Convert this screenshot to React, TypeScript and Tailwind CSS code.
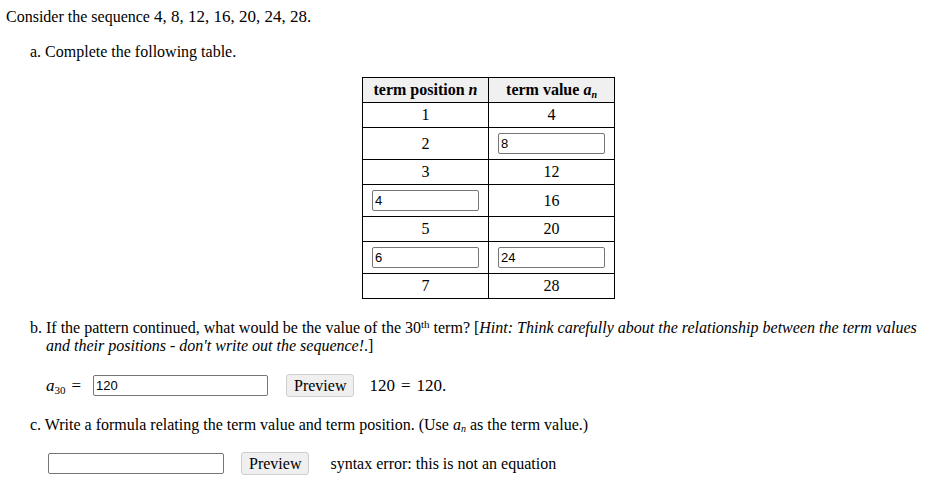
const serif = { fontFamily: '"Liberation Serif", "Times New Roman", serif' }
const sans = { fontFamily: '"Liberation Sans", Arial, sans-serif' }

type Cell = { text?: string; input?: string }

const ROWS: [Cell, Cell][] = [
  [{ text: '1' }, { text: '4' }],
  [{ text: '2' }, { input: '8' }],
  [{ text: '3' }, { text: '12' }],
  [{ input: '4' }, { text: '16' }],
  [{ text: '5' }, { text: '20' }],
  [{ input: '6' }, { input: '24' }],
  [{ text: '7' }, { text: '28' }],
]

function TableCell({ cell }: { cell: Cell }) {
  if (cell.input !== undefined) {
    return (
      <td className="h-[32px] border border-black px-[9px] text-center align-middle">
        <input
          readOnly
          value={cell.input}
          className="box-border block h-[21px] w-[107px] rounded-[2px] border border-[#767676] bg-white px-[2px] text-[13px] text-black outline-none"
          style={sans}
        />
      </td>
    )
  }
  return (
    <td className="h-[25px] border border-black text-center align-middle text-[16px] leading-[18px]">
      {cell.text}
    </td>
  )
}

function PreviewButton() {
  return (
    <button
      type="button"
      className="h-[23px] rounded-[3px] border border-[#cfcfcf] bg-[#efefef] px-[7px] text-[16px] leading-none text-black"
      style={serif}
    >
      Preview
    </button>
  )
}

export default function App() {
  return (
    <div className="min-h-screen bg-white text-[16px] text-black" style={serif}>
      <div className="pl-[6px] pt-[8px] leading-[18px]" style={serif}>
        Consider the sequence <span className="text-[17px]">4, 8, 12, 16, 20, 24, 28.</span>
      </div>

      <div className="pl-[30px] pt-[17px] leading-[18px]" style={serif}>
        a. Complete the following table.
      </div>

      <div className="pl-[362px] pt-[16px]">
        <table className="border-collapse border border-black" style={serif}>
          <thead>
            <tr className="bg-[#f0f0f0]">
              <th className="h-[25px] w-[126px] border border-black text-center text-[16px] font-bold leading-[18px]">
                term position <i className="font-bold">n</i>
              </th>
              <th className="h-[25px] w-[126px] border border-black text-center text-[16px] font-bold leading-[18px]">
                term value <i className="font-bold">a<sub className="text-[10px]">n</sub></i>
              </th>
            </tr>
          </thead>
          <tbody>
            {ROWS.map((row, i) => (
              <tr key={i}>
                <TableCell cell={row[0]} />
                <TableCell cell={row[1]} />
              </tr>
            ))}
          </tbody>
        </table>
      </div>

      <div className="pl-[30px] pr-[16px] pt-[20px] leading-[18px]" style={serif}>
        <div className="pl-[16px] -indent-[16px]">
          b. If the pattern continued, what would be the value of the 30
          <sup className="text-[11px] leading-none">th</sup> term? [
          <i>
            Hint: Think carefully about the relationship between the term values and their positions -
            don't write out the sequence!
          </i>
          .]
        </div>
      </div>

      <div className="flex items-center pl-[46px] pt-[18px]" style={serif}>
        <span className="w-[47px] text-[17px] leading-none">
          <i>a</i>
          <sub className="text-[11px]">30</sub>
          <span className="ml-[6px]">=</span>
        </span>
        <input
          readOnly
          value="120"
          className="box-border h-[21px] w-[175px] rounded-[2px] border border-[#767676] bg-white px-[2px] text-[13px] text-black outline-none"
          style={sans}
        />
        <span className="ml-[18px] flex">
          <PreviewButton />
        </span>
        <span className="ml-[15px] text-[17px]">
          120<span className="mx-[6px]">=</span>120.
        </span>
      </div>

      <div className="pl-[30px] pt-[17px] leading-[18px]" style={serif}>
        c. Write a formula relating the term value and term position. (Use{' '}
        <i>
          a<sub className="text-[10px]">n</sub>
        </i>{' '}
        as the term value.)
      </div>

      <div className="flex items-center pl-[48px] pt-[18px]" style={serif}>
        <input
          readOnly
          value=""
          className="box-border h-[21px] w-[176px] rounded-[2px] border border-[#767676] bg-white px-[2px] text-[13px] outline-none"
        />
        <span className="ml-[17px] flex">
          <PreviewButton />
        </span>
        <span className="ml-[21px]">syntax error: this is not an equation</span>
      </div>
    </div>
  )
}
